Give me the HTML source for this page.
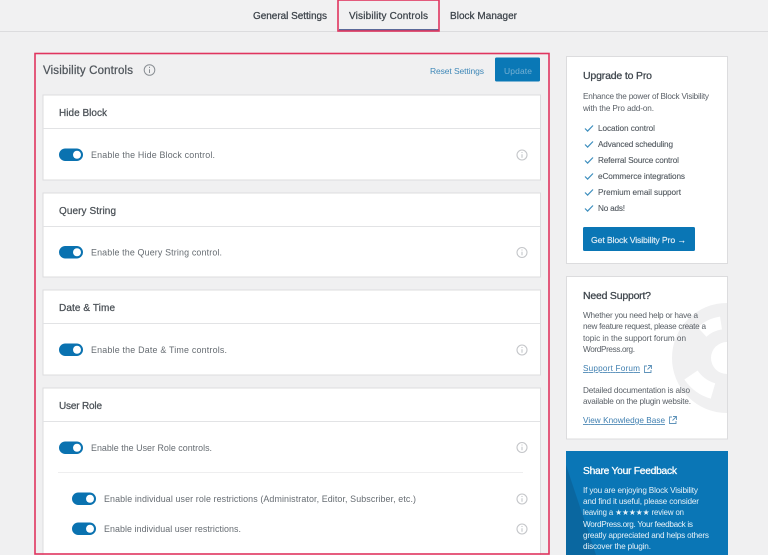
<!DOCTYPE html>
<html><head><meta charset="utf-8"><style>
html,body{margin:0;padding:0;width:768px;height:555px;overflow:hidden;background:#f0f0f1}
svg{display:block;filter:blur(.3px)}
text{font-family:"Liberation Sans",sans-serif;font-size:9px;fill:#50575e}
.tab{font-size:10px;fill:#3c434a;stroke:#3c434a;stroke-width:.25px}
.h{font-size:10px;fill:#4a5056;stroke:#4a5056;stroke-width:.25px}
.s{font-size:8.9px;fill:#666c72}
.p{font-size:8.2px;fill:#5a6067}
.l{font-size:8.2px;fill:#50575e;stroke:#50575e;stroke-width:.1px}
.w{font-size:8.2px;fill:#e6f1f8}
.t{font-size:10.5px;fill:#3c434a;stroke:#3c434a;stroke-width:.25px}
.a{font-size:8.2px;fill:#3f7fb0;text-decoration:underline}
</style></head><body>
<svg xmlns="http://www.w3.org/2000/svg" width="768" height="555" viewBox="0 0 768 555">
<defs>
<g id="i"><circle r="5" fill="none" stroke="#c4c6c9" stroke-width="1.1"/><path d="M0-.8V2.8M0-3V-2" stroke="#c4c6c9" stroke-width="1.1" fill="none"/></g>
<g id="i2"><circle r="5.300" fill="none" stroke="#8a8f94" stroke-width="1"/><path d="M0-.8V3M0-3.200V-2" stroke="#8a8f94" stroke-width="1" fill="none"/></g>
<g id="tg"><rect width="24" height="12.5" rx="6.25" fill="#0a72b0"/><circle cx="18" cy="6.25" r="4" fill="#fff"/></g>
<path id="c" d="M0 4L2.6 6.6L8 1" fill="none" stroke="#3f8fbe" stroke-width="1.2"/>
<path id="e" d="M3 1H0.5V7.5H7V5M4 .5H7.5V4M7.5 .5L3.5 4.5" fill="none" stroke="#5f93ba" stroke-width=".9"/>
<clipPath id="cl"><rect x="567" y="277" width="160" height="162"/></clipPath>
<clipPath id="fb"><rect x="566" y="451" width="162" height="104"/></clipPath>
</defs>
<rect width="768" height="555" fill="#f0f0f1"/>
<rect y="0" width="768" height="31" fill="#f1f1f2"/>
<rect y="31" width="768" height="1" fill="#dcdcde"/>
<text class="tab" x="253" y="19" textLength="74" lengthAdjust="spacing">General Settings</text>
<text class="tab" x="349" y="19" textLength="79" lengthAdjust="spacing">Visibility Controls</text>
<text class="tab" x="450" y="19" textLength="67" lengthAdjust="spacing">Block Manager</text>
<rect x="339" y="29" width="100" height="2" fill="#5b6a9a"/>
<rect x="338" y="0" width="101" height="31" fill="none" stroke="#e0355f" stroke-width="1.6"/>

<text x="43" y="74" textLength="90" lengthAdjust="spacing" style="font-size:11.5px;fill:#50565c;stroke:#50565c;stroke-width:.25px">Visibility Controls</text>
<use href="#i2" x="149.500" y="70"/>
<text x="430" y="74" textLength="54" lengthAdjust="spacing" style="font-size:8.5px;fill:#3f88b8">Reset Settings</text>
<rect x="495" y="57.500" width="45" height="24" rx="1.500" fill="#0a78b6"/>
<text x="504" y="74" textLength="28" lengthAdjust="spacing" style="font-size:8.5px;fill:#76b1d4">Update</text>

<g fill="#fff" stroke="#dcdcde">
<rect x="43" y="95" width="497.500" height="85"/>
<rect x="43" y="193" width="497.500" height="84"/>
<rect x="43" y="290" width="497.500" height="85"/>
<rect x="43" y="388" width="497.500" height="170"/>
</g>
<g fill="#e2e3e5">
<rect x="43" y="128" width="497" height="1"/>
<rect x="43" y="226" width="497" height="1"/>
<rect x="43" y="323" width="497" height="1"/>
<rect x="43" y="421" width="497" height="1"/>
<rect x="58" y="472" width="465" height="1" fill="#eeeeef"/>
</g>
<rect x="35" y="53.500" width="514" height="500.500" fill="none" stroke="#e0355f" stroke-width="1.6"/>

<text class="h" x="59" y="116" textLength="48" lengthAdjust="spacing">Hide Block</text>
<text class="h" x="59" y="214" textLength="57" lengthAdjust="spacing">Query String</text>
<text class="h" x="59" y="311" textLength="56" lengthAdjust="spacing">Date &amp; Time</text>
<text class="h" x="59" y="409" textLength="43" lengthAdjust="spacing">User Role</text>

<use href="#tg" x="59" y="148.500"/>
<use href="#tg" x="59" y="246"/>
<use href="#tg" x="59" y="343.500"/>
<use href="#tg" x="59" y="441.500"/>
<use href="#tg" x="72" y="492.500"/>
<use href="#tg" x="72" y="522.500"/>

<text class="s" x="91" y="158" textLength="124" lengthAdjust="spacing">Enable the Hide Block control.</text>
<text class="s" x="91" y="255.500" textLength="131" lengthAdjust="spacing">Enable the Query String control.</text>
<text class="s" x="91" y="353" textLength="136" lengthAdjust="spacing">Enable the Date &amp; Time controls.</text>
<text class="s" x="91" y="451" textLength="121" lengthAdjust="spacing">Enable the User Role controls.</text>
<text class="s" x="104" y="502" textLength="312" lengthAdjust="spacing">Enable individual user role restrictions (Administrator, Editor, Subscriber, etc.)</text>
<text class="s" x="104" y="532" textLength="137" lengthAdjust="spacing">Enable individual user restrictions.</text>

<use href="#i" x="522" y="155"/>
<use href="#i" x="522" y="252.500"/>
<use href="#i" x="522" y="350"/>
<use href="#i" x="522" y="447.500"/>
<use href="#i" x="522" y="499"/>
<use href="#i" x="522" y="529"/>

<!-- Upgrade -->
<rect x="566.500" y="56.500" width="161" height="207" fill="#fff" stroke="#dcdcde"/>
<text class="t" x="583" y="79" textLength="69" lengthAdjust="spacing">Upgrade to Pro</text>
<text class="p" x="583" y="99" textLength="126" lengthAdjust="spacing">Enhance the power of Block Visibility</text>
<text class="p" x="583" y="111" textLength="71" lengthAdjust="spacing">with the Pro add-on.</text>
<use href="#c" x="585" y="124.500"/><text class="l" x="598" y="131" textLength="57" lengthAdjust="spacing">Location control</text>
<use href="#c" x="585" y="140.500"/><text class="l" x="598" y="147" textLength="75" lengthAdjust="spacing">Advanced scheduling</text>
<use href="#c" x="585" y="156.500"/><text class="l" x="598" y="163" textLength="81" lengthAdjust="spacing">Referral Source control</text>
<use href="#c" x="585" y="172.500"/><text class="l" x="598" y="179" textLength="87" lengthAdjust="spacing">eCommerce integrations</text>
<use href="#c" x="585" y="188.500"/><text class="l" x="598" y="195" textLength="83" lengthAdjust="spacing">Premium email support</text>
<use href="#c" x="585" y="204.500"/><text class="l" x="598" y="211" textLength="27" lengthAdjust="spacing">No ads!</text>
<rect x="583" y="227" width="112" height="24" rx="1.500" fill="#0a76b5"/>
<text x="591" y="243" textLength="95" lengthAdjust="spacing" style="font-size:8.700px;fill:#e4eff7;stroke:#e4eff7;stroke-width:.15px">Get Block Visibility Pro →</text>

<!-- Support -->
<rect x="566.500" y="276.500" width="161" height="162.500" fill="#fff" stroke="#dcdcde"/>
<g clip-path="url(#cl)">
<circle cx="727" cy="358" r="55" fill="#f0f0f1"/>
<circle cx="727" cy="358" r="16" fill="#fff"/>
<path d="M691 375A40 40 0 0 0 713 391" fill="none" stroke="#fff" stroke-width="16"/>
<path d="M702 332A36 36 0 0 1 721 323" fill="none" stroke="#fff" stroke-width="13"/>
</g>
<text class="t" x="583" y="299" textLength="68" lengthAdjust="spacing">Need Support?</text>
<text class="p" x="583" y="318" textLength="115" lengthAdjust="spacing">Whether you need help or have a</text>
<text class="p" x="583" y="329" textLength="123" lengthAdjust="spacing">new feature request, please create a</text>
<text class="p" x="583" y="341" textLength="103" lengthAdjust="spacing">topic in the support forum on</text>
<text class="p" x="583" y="352" textLength="52" lengthAdjust="spacing">WordPress.org.</text>
<text class="a" x="583" y="371" textLength="57" lengthAdjust="spacing">Support Forum</text>
<use href="#e" x="644" y="365"/>
<text class="p" x="583" y="393" textLength="107" lengthAdjust="spacing">Detailed documentation is also</text>
<text class="p" x="583" y="404" textLength="108" lengthAdjust="spacing">available on the plugin website.</text>
<text class="a" x="583" y="423" textLength="82" lengthAdjust="spacing">View Knowledge Base</text>
<use href="#e" x="669" y="416"/>

<!-- Feedback -->
<rect x="566" y="451" width="162" height="104" fill="#0a76b6"/>
<path d="M566 465L596 555H566Z" fill="#0a67a0" clip-path="url(#fb)"/>
<text x="583" y="474" textLength="94" lengthAdjust="spacing" style="font-size:10.300px;fill:#fff;stroke:#fff;stroke-width:.3px">Share Your Feedback</text>
<text class="w" x="583" y="493" textLength="115" lengthAdjust="spacing">If you are enjoying Block Visibility</text>
<text class="w" x="583" y="504" textLength="116" lengthAdjust="spacing">and find it useful, please consider</text>
<text class="w" x="583" y="515" textLength="101" lengthAdjust="spacing" style="font-family:'Liberation Sans','DejaVu Sans',sans-serif;font-size:7.800px">leaving a ★★★★★ review on</text>
<text class="w" x="583" y="527" textLength="110" lengthAdjust="spacing">WordPress.org. Your feedback is</text>
<text class="w" x="583" y="538" textLength="126" lengthAdjust="spacing">greatly appreciated and helps others</text>
<text class="w" x="583" y="549" textLength="68" lengthAdjust="spacing">discover the plugin.</text>
</svg>
</body></html>
